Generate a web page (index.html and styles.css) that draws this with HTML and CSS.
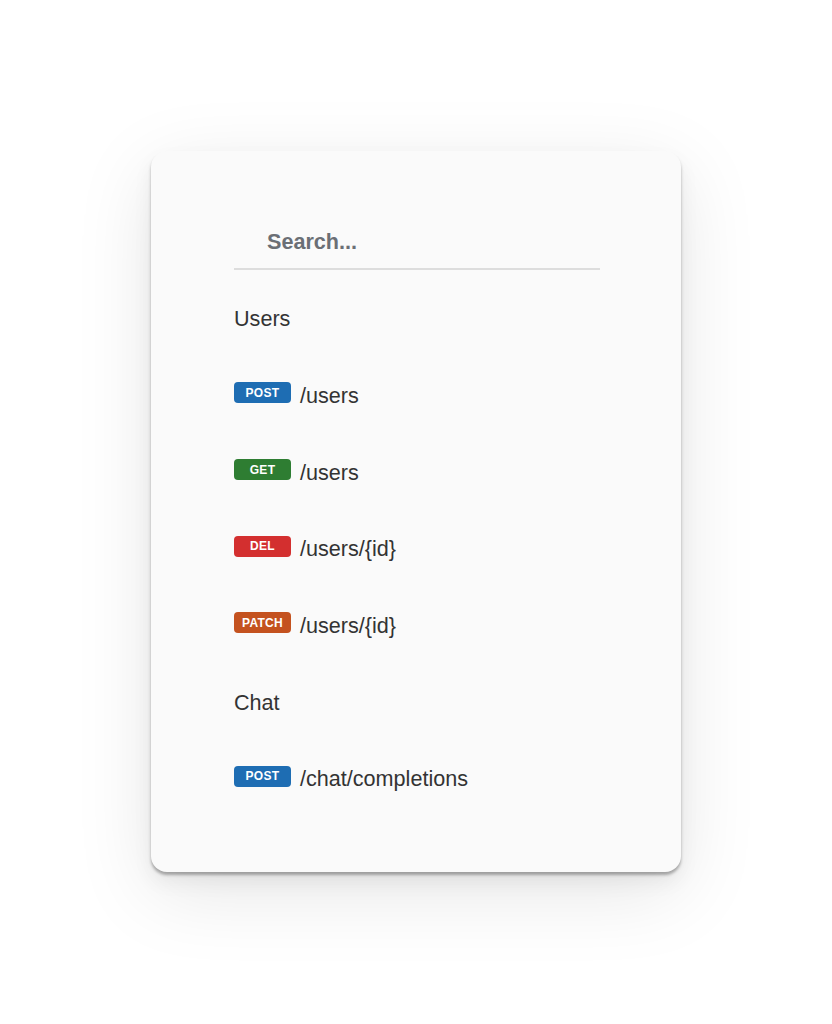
FILE: index.html
```html
<!DOCTYPE html>
<html>
<head>
    <title>API Reference</title>
    <link rel="stylesheet" href="styles.css">
</head>
<body>
    <div class="card">
        <div class="search">
            <input type="text" placeholder="Search...">
        </div>

        <ul class="nav">
            <li class="group">Users</li>
            <li class="endpoint"><span class="method post">POST</span><span class="path">/users</span></li>
            <li class="endpoint"><span class="method get">GET</span><span class="path">/users</span></li>
            <li class="endpoint"><span class="method del">DEL</span><span class="path">/users/{id}</span></li>
            <li class="endpoint"><span class="method patch">PATCH</span><span class="path">/users/{id}</span></li>
            <li class="group">Chat</li>
            <li class="endpoint"><span class="method post">POST</span><span class="path">/chat/completions</span></li>
        </ul>
    </div>
</body>
</html>
```

FILE: styles.css
```css
html, body {
    min-height: 100%;
}
body {
    margin: 0;
    min-height: 1024px;
    box-sizing: border-box;
    padding: 151px 0 0 151px;
    background-color: #ffffff;
    font-family: "Liberation Sans", Arial, sans-serif;
}
.card {
    width: 530px;
    height: 721px;
    box-sizing: border-box;
    padding: 64px 81px 0 83px;
    background-color: #fafafa;
    border-radius: 16px;
    box-shadow: 0 3px 3px rgba(0,0,0,0.3), 0 10px 20px rgba(0,0,0,0.06), 0 20px 80px rgba(0,0,0,0.1);
}
.search input {
    display: block;
    width: 100%;
    height: 55px;
    box-sizing: border-box;
    padding: 0 0 0 33px;
    border: none;
    border-bottom: 2px solid #dddddd;
    background: transparent;
    font-family: inherit;
    font-size: 21.6px;
    font-weight: bold;
    color: #333;
    outline: none;
}
.search input::placeholder {
    color: #6b6f75;
}
.nav {
    list-style: none;
    margin: 11px 0 0;
    padding: 0;
}
.nav li {
    display: flex;
    align-items: center;
    height: 76.67px;
    font-size: 21.6px;
    color: #333333;
}
.method {
    width: 57px;
    height: 21px;
    margin: 0 9px 6px 0;
    border-radius: 4px;
    display: flex;
    align-items: center;
    justify-content: center;
    font-size: 12px;
    font-weight: bold;
    letter-spacing: 0.3px;
    color: #ffffff;
}
.method.post {
    background-color: #1e6db3;
}
.method.get {
    background-color: #2e7d32;
}
.method.del {
    background-color: #d32f2f;
}
.method.patch {
    background-color: #c4521f;
}
```
